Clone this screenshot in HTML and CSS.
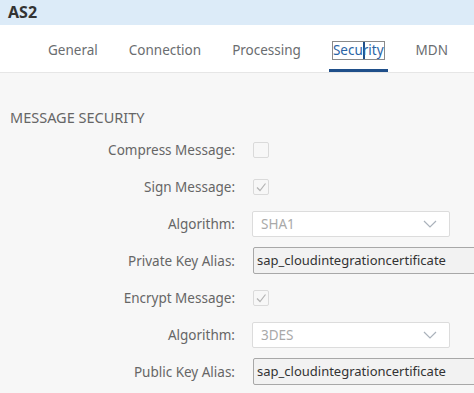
FILE: index.html
```html
<!DOCTYPE html>
<html lang="en">
    <head>
        <meta charset="UTF-8" />
        <title>AS2 Security</title>
        <link rel="stylesheet" href="styles.css">
    </head>
    <body>
        <div class="header">AS2</div>

        <!-- Tabs -->
        <div class="tabs">
            <div class="tab">General</div>
            <div class="tab">Connection</div>
            <div class="tab">Processing</div>
            <div class="tab selected"><span class="focus">Secu<span class="caret"></span>rity</span></div>
            <div class="tab">MDN</div>
        </div>

        <!-- Security form -->
        <div class="section">
            <h2>MESSAGE SECURITY</h2>
            <div class="form">
                <div class="row">
                    <label>Compress Message:</label>
                    <span class="checkbox"></span>
                </div>
                <div class="row">
                    <label>Sign Message:</label>
                    <span class="checkbox checked">
                        <svg width="12" height="12" viewBox="0 0 12 12"><path d="M2 6.5 L5 9.5 L10.5 2.5" fill="none" stroke="#b4b4b4" stroke-width="1.2"/></svg>
                    </span>
                </div>
                <div class="row">
                    <label>Algorithm:</label>
                    <div class="select">
                        <span>SHA1</span>
                        <svg width="14" height="8" viewBox="0 0 14 8"><path d="M1 1 L7 7 L13 1" fill="none" stroke="#aab2bb" stroke-width="1.2"/></svg>
                    </div>
                </div>
                <div class="row">
                    <label>Private Key Alias:</label>
                    <div class="input">sap_cloudintegrationcertificate</div>
                </div>
                <div class="row">
                    <label>Encrypt Message:</label>
                    <span class="checkbox checked">
                        <svg width="12" height="12" viewBox="0 0 12 12"><path d="M2 6.5 L5 9.5 L10.5 2.5" fill="none" stroke="#b4b4b4" stroke-width="1.2"/></svg>
                    </span>
                </div>
                <div class="row">
                    <label>Algorithm:</label>
                    <div class="select">
                        <span>3DES</span>
                        <svg width="14" height="8" viewBox="0 0 14 8"><path d="M1 1 L7 7 L13 1" fill="none" stroke="#aab2bb" stroke-width="1.2"/></svg>
                    </div>
                </div>
                <div class="row">
                    <label>Public Key Alias:</label>
                    <div class="input">sap_cloudintegrationcertificate</div>
                </div>
            </div>
        </div>
    </body>
</html>
```

FILE: styles.css
```css
body {
    font-family: "Noto Sans", "Open Sans", sans-serif;
    margin: 0;
    background-color: #f7f7f7;
    overflow: hidden;
    color: #666;
}
.header {
    height: 25px;
    line-height: 25px;
    padding-left: 8px;
    background-color: #dcebf8;
    color: #333;
    font-weight: bold;
    font-size: 16px;
}
.tabs {
    display: flex;
    gap: 25px;
    height: 47px;
    padding-left: 45px;
    background: #fff;
    border-bottom: 1px solid #e6e6e6;
}
.tab {
    box-sizing: border-box;
    height: 47px;
    padding: 15px 3px 0;
    line-height: 20px;
    font-size: 13.5px;
    color: #6a6d70;
    border-bottom: 3px solid transparent;
}
.tab.selected {
    color: #2b64a5;
    border-bottom-color: #1f4f8a;
}
.focus {
    display: inline-block;
    outline: 1px solid #8a8a8a;
    outline-offset: -1px;
    padding: 0 1px;
    line-height: 19px;
}
.caret {
    display: inline-block;
    width: 0;
    height: 17px;
    vertical-align: -4px;
    border-left: 2px solid #1f4f8a;
    margin-right: -2px;
}
.section {
    padding-top: 34px;
}
h2 {
    margin: 0 0 4px 10px;
    font-size: 14.5px;
    font-weight: normal;
    line-height: 20px;
    color: #666;
}
.row {
    display: flex;
    align-items: center;
    height: 37px;
}
.row label {
    width: 235px;
    text-align: right;
    font-size: 13.5px;
    color: #666;
    margin-right: 17px;
    flex-shrink: 0;
}
.checkbox {
    box-sizing: border-box;
    width: 16px;
    height: 16px;
    margin-left: 1px;
    border: 1px solid #dadada;
    border-radius: 2px;
    background: #f7f7f7;
    display: flex;
    align-items: center;
    justify-content: center;
}
.select {
    box-sizing: border-box;
    width: 198px;
    height: 26px;
    border: 1px solid #dcdcdc;
    border-radius: 2px;
    background: #fff;
    display: flex;
    align-items: center;
    justify-content: space-between;
    padding: 0 12px 0 8px;
    font-size: 13.5px;
    color: #a9a9a9;
}
.input {
    box-sizing: border-box;
    flex-shrink: 0;
    width: 240px;
    height: 27px;
    margin-left: 1px;
    border: 1px solid #a8a8a8;
    border-radius: 2px;
    background: #f2f2f2;
    line-height: 25px;
    padding-left: 3px;
    font-size: 13px;
    color: #333;
}
```
